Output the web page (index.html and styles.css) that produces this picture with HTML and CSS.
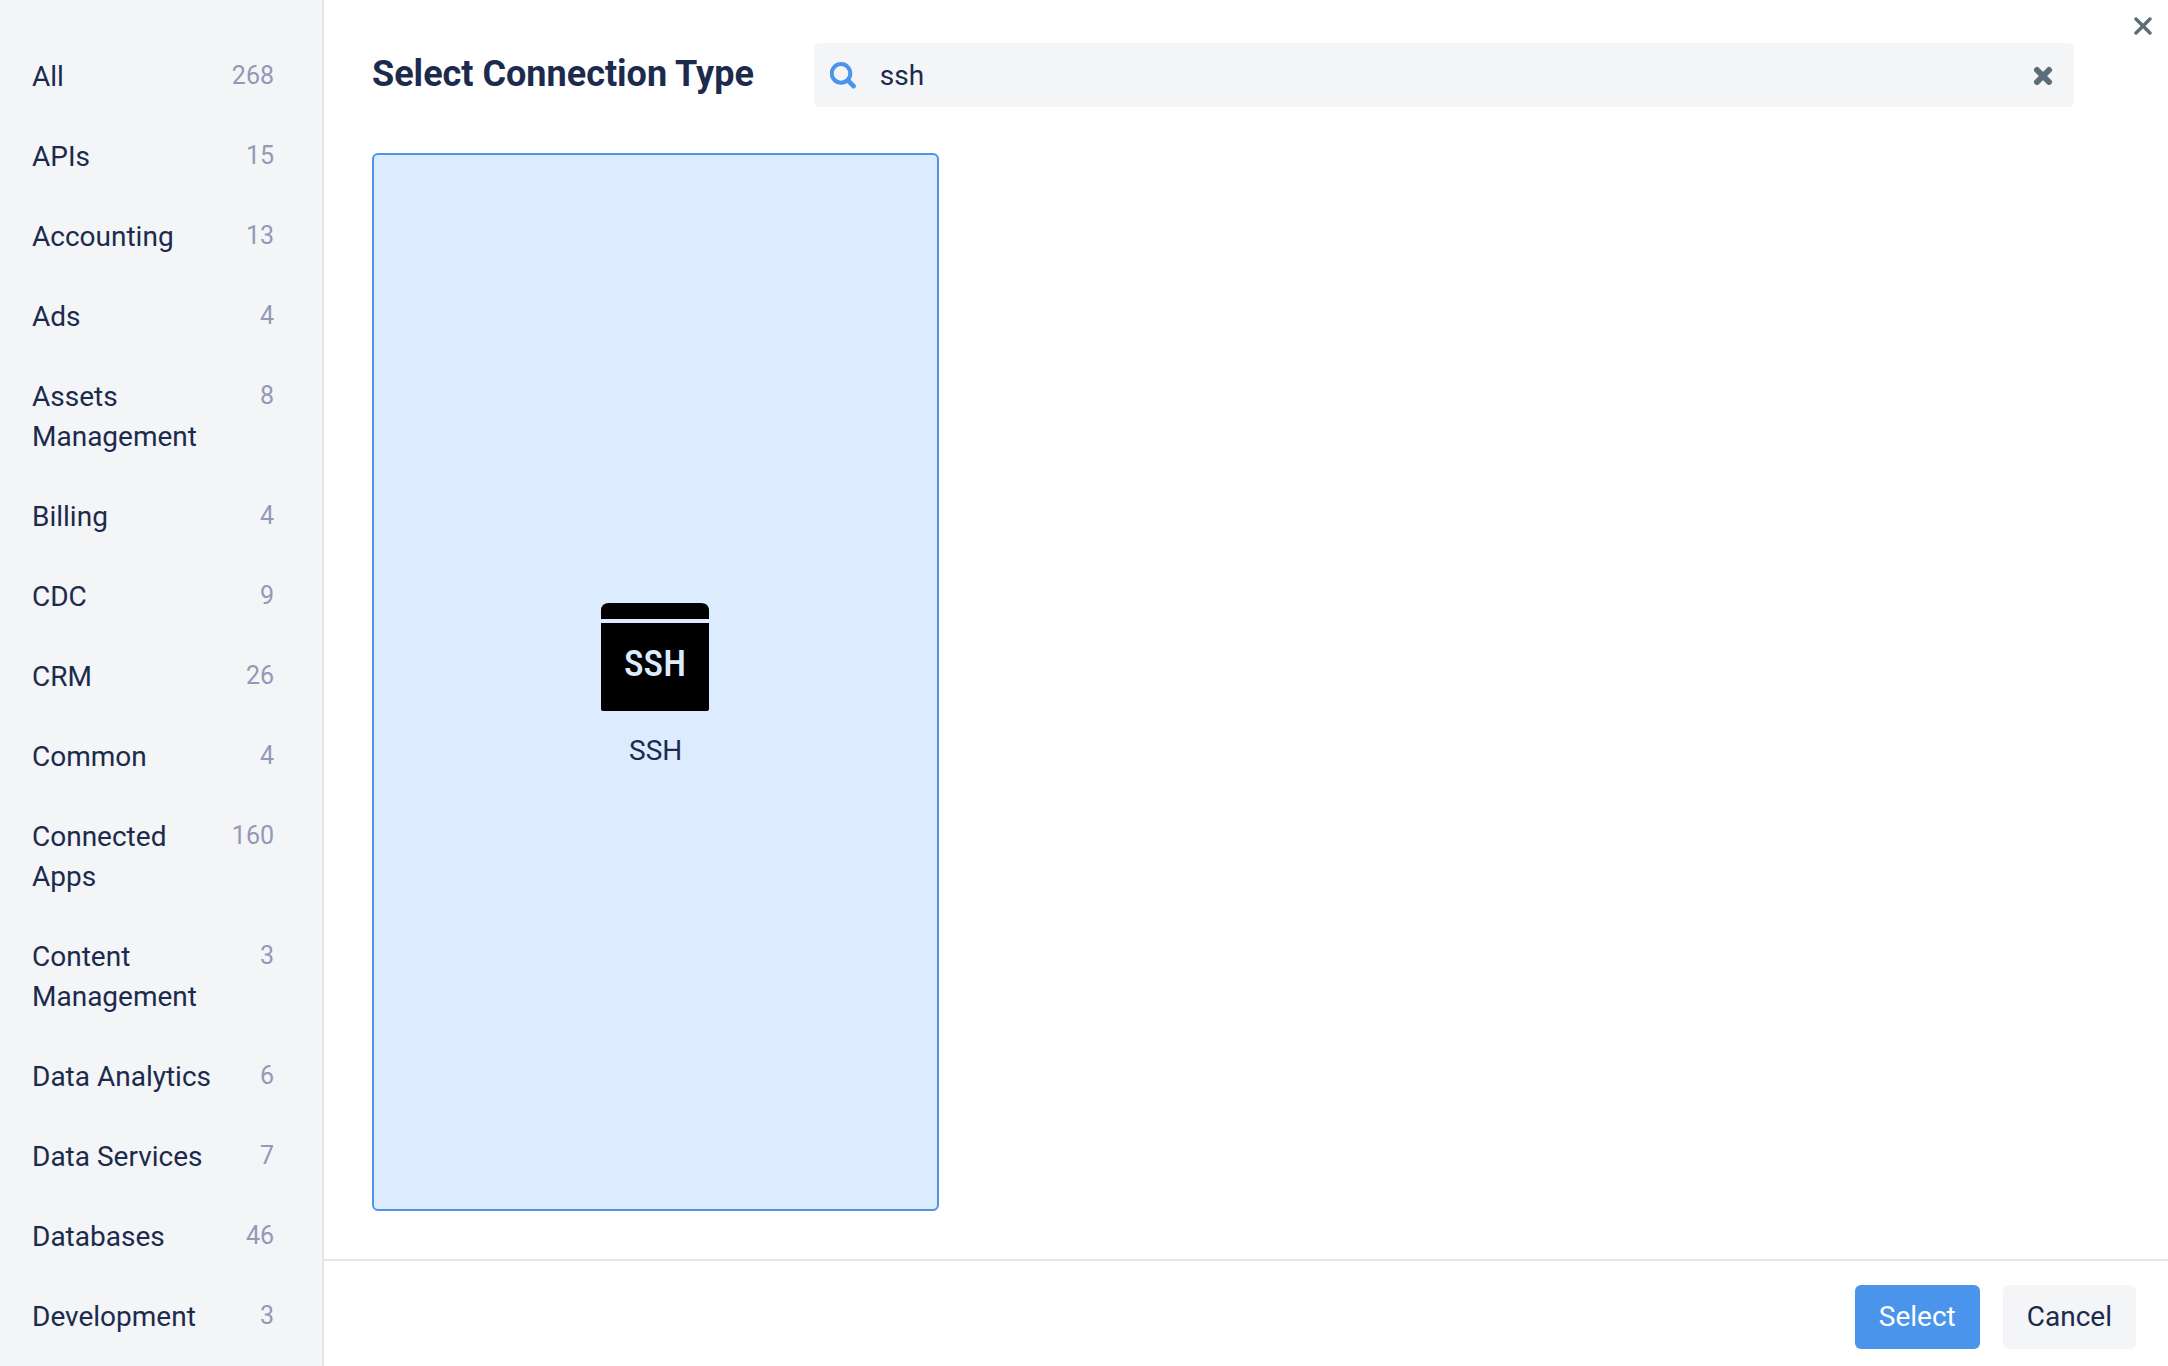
FILE: index.html
```html
<!DOCTYPE html>
<html lang="en">
<head>
<meta charset="utf-8">
<meta name="viewport" content="width=device-width, initial-scale=1">
<title>Select Connection Type</title>
<link rel="stylesheet" href="styles.css">
</head>
<body>
<div class="dialog">
  <nav class="sidebar" aria-label="Categories">
    <a class="category" href="#all"><span>All</span><span class="count">268</span></a>
    <a class="category" href="#apis"><span>APIs</span><span class="count">15</span></a>
    <a class="category" href="#accounting"><span>Accounting</span><span class="count">13</span></a>
    <a class="category" href="#ads"><span>Ads</span><span class="count">4</span></a>
    <a class="category" href="#assets"><span>Assets Management</span><span class="count">8</span></a>
    <a class="category" href="#billing"><span>Billing</span><span class="count">4</span></a>
    <a class="category" href="#cdc"><span>CDC</span><span class="count">9</span></a>
    <a class="category" href="#crm"><span>CRM</span><span class="count">26</span></a>
    <a class="category" href="#common"><span>Common</span><span class="count">4</span></a>
    <a class="category" href="#connected"><span>Connected Apps</span><span class="count">160</span></a>
    <a class="category" href="#content"><span>Content Management</span><span class="count">3</span></a>
    <a class="category" href="#analytics"><span>Data Analytics</span><span class="count">6</span></a>
    <a class="category" href="#services"><span>Data Services</span><span class="count">7</span></a>
    <a class="category" href="#databases"><span>Databases</span><span class="count">46</span></a>
    <a class="category" href="#development"><span>Development</span><span class="count">3</span></a>
  </nav>
  <main class="main">
    <button class="close" type="button" aria-label="Close">
      <svg width="18" height="18" viewBox="0 0 18 18"><path d="M2 2 16 16M16 2 2 16" stroke="currentColor" stroke-width="3.4" stroke-linecap="round"/></svg>
    </button>
    <header class="header">
      <h1 class="title">Select Connection Type</h1>
      <div class="search">
        <svg class="search-icon" width="28" height="28" viewBox="0 0 28 28" fill="none" stroke="currentColor"><circle cx="11" cy="12.4" r="9.3" stroke-width="4"/><path d="M18.4 19.8 23.6 25.2" stroke-width="4.6" stroke-linecap="round"/></svg>
        <input class="search-input" type="text" aria-label="Search connection types" value="ssh">
        <button class="clear" type="button" aria-label="Clear search">
          <svg width="20" height="20" viewBox="0 0 20 20"><path d="M4 5 16 17M16 5 4 17" stroke="currentColor" stroke-width="6" stroke-linecap="round"/></svg>
        </button>
      </div>
    </header>
    <section class="grid" aria-label="Connection types">
      <button class="card" type="button" aria-pressed="true">
        <svg class="logo" viewBox="0 0 126 126" aria-hidden="true">
          <path d="M8 25V17q0-8 8-8h92q8 0 8 8v8z"/>
          <path d="M8 29h108v86q0 2-2 2H10q-2 0-2-2z"/>
          <text class="logo-text" x="62" y="82" text-anchor="middle">SSH</text>
        </svg>
        <span>SSH</span>
      </button>
    </section>
    <footer class="footer">
      <button class="button button-primary" type="button">Select</button>
      <button class="button" type="button">Cancel</button>
    </footer>
  </main>
</div>
</body>
</html>
```
FILE: styles.css
```css
* {
  box-sizing: border-box;
}

body {
  margin: 0;
  color: #1c2b4d;
  background: #fff;
  font: 28px/40px Roboto, "Liberation Sans", sans-serif;
}

button,
input {
  margin: 0;
  padding: 0;
  border: 0;
  background: none;
  color: inherit;
  font: inherit;
}

button {
  cursor: pointer;
}

svg {
  display: block;
}

.dialog {
  display: flex;
  height: 100vh;
  overflow: hidden;
}

.sidebar {
  flex: 0 0 324px;
  padding-top: 37px;
  overflow: hidden;
  border-right: 2px solid #e5e5e5;
  background: #f3f5f7;
}

.category {
  display: flex;
  justify-content: space-between;
  gap: 16px;
  padding: 20px 48px 20px 32px;
  color: inherit;
  text-decoration: none;
}

.count {
  color: #9499b7;
  font-size: 25px;
  line-height: 37px;
}

.main {
  position: relative;
  display: flex;
  flex: 1;
  flex-direction: column;
  min-width: 0;
}

.close {
  position: absolute;
  top: 17px;
  right: 16px;
  color: #5b6d79;
}

.header {
  display: flex;
  align-items: center;
  gap: 60px;
  padding: 43px 94px 0 48px;
}

.title {
  margin: 0;
  padding-bottom: 2px;
  font-size: 36px;
  font-weight: 700;
  line-height: 40px;
  white-space: nowrap;
}

.search {
  display: flex;
  flex: 1;
  align-items: center;
  gap: 22px;
  height: 64px;
  min-width: 0;
  padding: 0 21px 0 16px;
  border-radius: 6px;
  background: #f3f5f7;
}

.search-icon {
  flex: none;
  color: #4a94ec;
}

.search-input {
  flex: 1;
  min-width: 0;
  padding-top: 2px;
  outline: 0;
}

.clear {
  color: #5b6d79;
}

.grid {
  display: grid;
  flex: 1;
  grid-template-columns: repeat(3, 1fr);
  padding: 46px 94px 48px 48px;
}

.card {
  display: flex;
  flex-direction: column;
  align-items: center;
  justify-content: center;
  gap: 11px;
  border: 2px solid #4a94ec;
  border-radius: 6px;
  background: #dcebfe;
}

.logo {
  width: 126px;
  height: 126px;
}

.logo-text {
  fill: #dcebfe;
  font: 500 37px "Roboto Condensed", "Open Sans Condensed", "DejaVu Sans Condensed", sans-serif;
}

.footer {
  display: flex;
  justify-content: flex-end;
  gap: 23px;
  padding: 24px 32px 17px;
  border-top: 2px solid #e5e5e5;
}

.button {
  height: 64px;
  padding: 0 24px;
  border-radius: 6px;
  background: #f3f5f7;
}

.button-primary {
  background: #4a94ec;
  color: #fff;
}
```
